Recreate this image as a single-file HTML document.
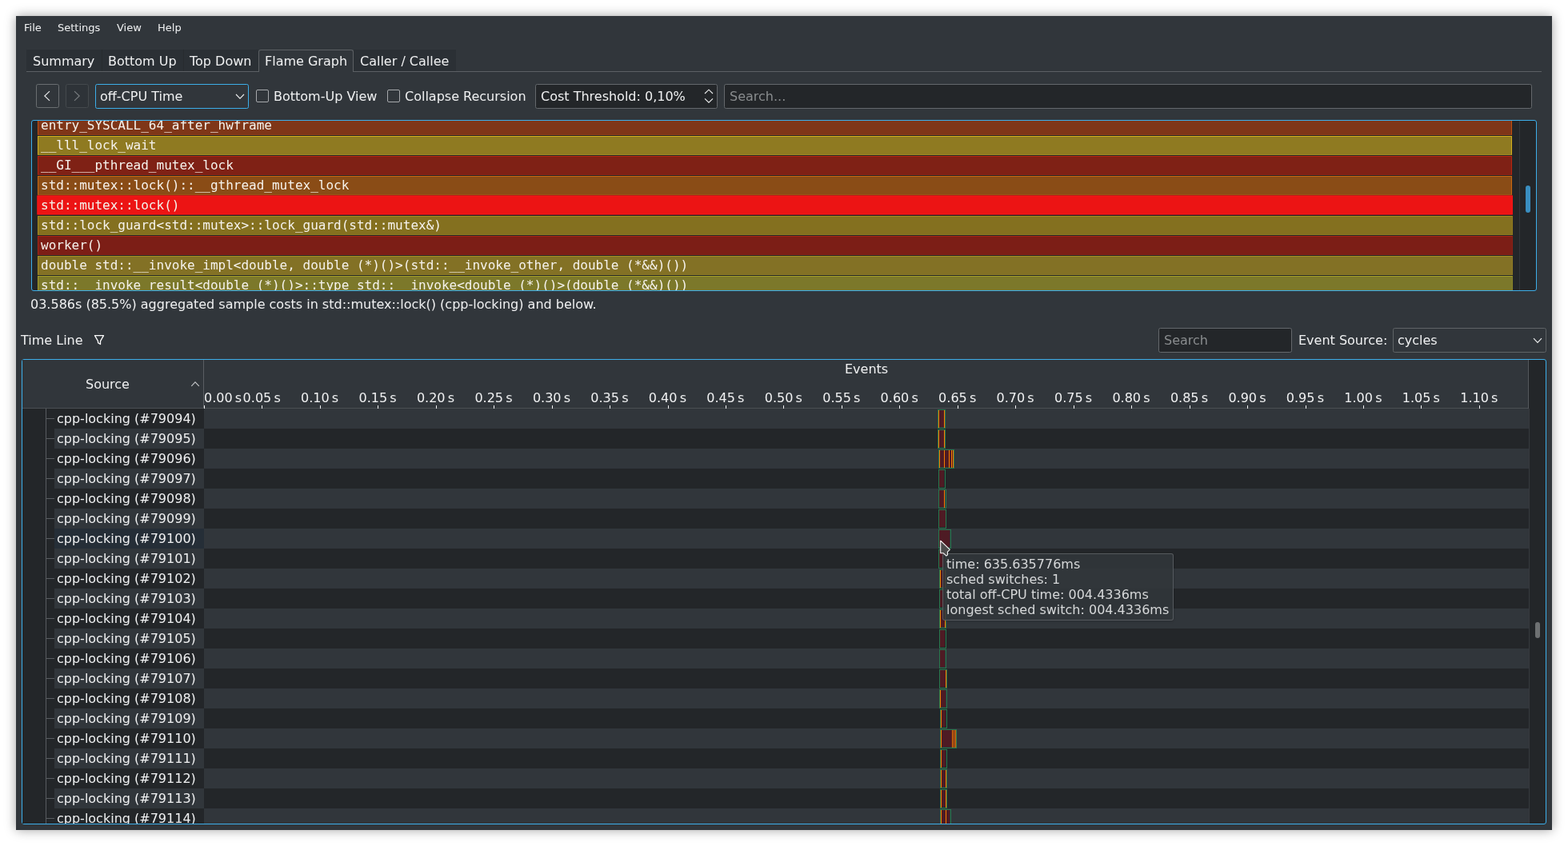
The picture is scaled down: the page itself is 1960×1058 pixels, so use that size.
<!DOCTYPE html>
<html lang="en">
<head>
<meta charset="utf-8">
<title>Hotspot</title>
<style>
html,body{margin:0;padding:0;}
body{width:1960px;height:1058px;background:#fff;overflow:hidden;position:relative;
  font-family:"DejaVu Sans","Liberation Sans",sans-serif;font-size:16px;color:#eff0f1;}
*{box-sizing:border-box;}
#win{position:absolute;left:20px;top:20px;width:1920px;height:1018px;background:#31363b;
  box-shadow:0 0 13px rgba(0,0,0,.38);}
#layer{position:absolute;left:0;top:0;width:1960px;height:1058px;will-change:transform;}
.a{position:absolute;}
.t{position:absolute;white-space:pre;line-height:20px;height:20px;}
.menu{font-size:13px;}
.tabbg{position:absolute;background:#2b3035;top:62px;height:27px;}
.btn{position:absolute;border:1px solid #6a6e71;border-radius:2.5px;background:#31363b;}
.field{position:absolute;border:1px solid #64686c;border-radius:2.5px;background:#232629;}
.cb{position:absolute;width:16px;height:16px;border:1px solid #a6a9ac;border-radius:2px;background:#31363b;}
.ph{color:#898c8e;}
svg{position:absolute;left:0;top:0;overflow:visible;}
.bar{position:absolute;left:47px;height:24px;border:1px solid;font-family:"DejaVu Sans Mono","Liberation Mono",monospace;
  font-size:16px;line-height:22px;padding-left:3px;white-space:pre;overflow:hidden;color:#f5f2ec;}
.row{position:absolute;left:28px;width:1883px;height:25px;background:#232629;}
.ev{position:absolute;left:227px;top:0;width:1656px;height:25px;}
.src{position:absolute;left:40px;top:0;height:25px;width:187px;line-height:25px;padding-left:3px;white-space:pre;}
.alt{background:#31363b;}
.tl{position:absolute;top:488px;line-height:20px;height:20px;white-space:pre;}
.box{position:absolute;border:1px solid #2f7d55;background:#4e1a23;}
.o{position:absolute;top:0;bottom:0;width:1px;background:#f27c0a;}
</style>
</head>
<body>
<div id="win"></div>
<div id="layer">
<div class="t menu" style="left:30px;top:25px;">File</div>
<div class="t menu" style="left:72px;top:25px;">Settings</div>
<div class="t menu" style="left:146px;top:25px;">View</div>
<div class="t menu" style="left:197px;top:25px;">Help</div>
<div class="a" style="left:33px;top:89px;width:1894px;height:1px;background:#5c6064;"></div>
<div class="tabbg" style="left:33px;width:290px;"></div>
<div class="tabbg" style="left:442px;width:128px;"></div>
<div class="a" style="left:127px;top:62px;width:1px;height:27px;background:#272b2f;"></div>
<div class="a" style="left:229px;top:62px;width:1px;height:27px;background:#272b2f;"></div>
<div class="a" style="left:323px;top:62px;width:119px;height:28px;border:1px solid #5c6064;border-bottom:0;border-radius:3px 3px 0 0;background:#31363b;"></div>
<div class="t" style="left:41px;top:67px;">Summary</div>
<div class="t" style="left:135px;top:67px;">Bottom Up</div>
<div class="t" style="left:237px;top:67px;">Top Down</div>
<div class="t" style="left:331px;top:67px;">Flame Graph</div>
<div class="t" style="left:450px;top:67px;">Caller / Callee</div>
<div class="btn" style="left:45px;top:105px;width:29px;height:30px;"></div>
<div class="btn" style="left:82px;top:105px;width:29px;height:30px;border-color:#44494d;background:#2e3338;"></div>
<div class="btn" style="left:119px;top:105px;width:192px;height:31px;border-color:#3daee9;"></div>
<div class="t" style="left:125px;top:111px;">off-CPU Time</div>
<div class="cb" style="left:320px;top:112px;"></div>
<div class="t" style="left:342px;top:111px;">Bottom-Up View</div>
<div class="cb" style="left:484px;top:112px;"></div>
<div class="t" style="left:506px;top:111px;">Collapse Recursion</div>
<div class="field" style="left:669px;top:105px;width:228px;height:31px;"></div>
<div class="t" style="left:676px;top:111px;">Cost Threshold: 0,10%</div>
<div class="field" style="left:905px;top:105px;width:1010px;height:31px;"></div>
<div class="t ph" style="left:912px;top:111px;">Search...</div>
<div class="a" style="left:39px;top:150px;width:1882px;height:214px;border:1px solid #3daee9;border-radius:3px;background:#232629;overflow:hidden;">
<div class="a" style="left:-40px;top:-151px;width:1960px;height:600px;">
<div class="bar" style="top:145px;width:1843px;background:#7f3618;border-color:#c2500f;border-bottom-color:#903c16;border-right-color:#c2500f;">entry_SYSCALL_64_after_hwframe</div>
<div class="bar" style="top:170px;width:1843px;background:#8f7a21;border-color:#d4ad1b;border-bottom-color:#a08720;border-right-color:#d4ad1b;">__lll_lock_wait</div>
<div class="bar" style="top:195px;width:1843px;background:#7f2115;border-color:#b8260f;border-bottom-color:#8d2214;border-right-color:#b8260f;">__GI___pthread_mutex_lock</div>
<div class="bar" style="top:220px;width:1843px;background:#8a4c16;border-color:#c9680f;border-bottom-color:#9a5314;border-right-color:#c9680f;">std::mutex::lock()::__gthread_mutex_lock</div>
<svg width="1960" height="600" viewBox="0 0 1960 600"><rect x="46.4" y="244.4" width="1844.5" height="24.1" fill="#ec1414"/><rect x="47.1" y="245.1" width="1843.1" height="22.7" fill="none" stroke="#fb1616" stroke-width="1"/></svg><div class="bar" style="top:245px;width:1844px;background:none;border-color:transparent;">std::mutex::lock()</div>
<div class="bar" style="top:270px;width:1844px;background:#84701f;border-color:#a88d1c;border-bottom-color:#8d771e;border-right-color:#8f791e;">std::lock_guard&lt;std::mutex&gt;::lock_guard(std::mutex&amp;)</div>
<div class="bar" style="top:295px;width:1844px;background:#7c1e16;border-color:#a82413;border-bottom-color:#872015;border-right-color:#892015;">worker()</div>
<div class="bar" style="top:320px;width:1844px;background:#837125;border-color:#a68f22;border-bottom-color:#8c7824;border-right-color:#8e7a24;">double std::__invoke_impl&lt;double, double (*)()&gt;(std::__invoke_other, double (*&amp;&amp;)())</div>
<div class="bar" style="top:345px;width:1844px;background:#7c782a;border-color:#a39d27;border-bottom-color:#868129;border-right-color:#888329;">std::__invoke_result&lt;double (*)()&gt;::type std::__invoke&lt;double (*)()&gt;(double (*&amp;&amp;)())</div>
<div class="a" style="left:1899px;top:151px;width:1px;height:212px;background:#32373b;"></div>
<div class="a" style="left:1907px;top:232px;width:6px;height:34px;border-radius:3px;background:#3a8ec0;"></div>
</div></div>
<div class="t" style="left:38px;top:371px;">03.586s (85.5%) aggregated sample costs in std::mutex::lock() (cpp-locking) and below.</div>
<div class="t" style="left:26px;top:416px;">Time Line</div>
<div class="field" style="left:1448px;top:410px;width:167px;height:31px;"></div>
<div class="t ph" style="left:1455px;top:416px;">Search</div>
<div class="t" style="left:1623px;top:416px;">Event Source:</div>
<div class="btn" style="left:1741px;top:410px;width:192px;height:31px;border-color:#5f6366;"></div>
<div class="t" style="left:1747px;top:416px;">cycles</div>
<div class="a" style="left:27px;top:449px;width:1906px;height:582px;border:1px solid #3daee9;border-radius:3px;background:#232629;"></div>
<div class="a" style="left:28px;top:450px;width:1883px;height:60px;background:#31363b;"></div>
<div class="a" style="left:28px;top:510px;width:1883px;height:1px;background:#4a4f53;"></div>
<div class="a" style="left:254px;top:450px;width:1px;height:60px;background:#5a5e62;"></div>
<div class="a" style="left:1910px;top:450px;width:1px;height:61px;background:#54585c;"></div>
<div class="a" style="left:1911px;top:511px;width:1px;height:519px;background:#363a3e;"></div>
<div class="t" style="left:107px;top:471px;">Source</div>
<div class="t" style="left:1056px;top:452px;">Events</div>
<div class="a" style="left:254.8px;top:507px;width:1px;height:4px;background:#eff0f1;"></div>
<div class="tl" style="left:255px;">0.00 s</div>
<div class="a" style="left:327.3px;top:507px;width:1px;height:4px;background:#eff0f1;"></div>
<div class="tl" style="left:277.2px;width:100px;text-align:center;">0.05 s</div>
<div class="a" style="left:399.7px;top:507px;width:1px;height:4px;background:#eff0f1;"></div>
<div class="tl" style="left:349.6px;width:100px;text-align:center;">0.10 s</div>
<div class="a" style="left:472.2px;top:507px;width:1px;height:4px;background:#eff0f1;"></div>
<div class="tl" style="left:422.1px;width:100px;text-align:center;">0.15 s</div>
<div class="a" style="left:544.6px;top:507px;width:1px;height:4px;background:#eff0f1;"></div>
<div class="tl" style="left:494.5px;width:100px;text-align:center;">0.20 s</div>
<div class="a" style="left:617.1px;top:507px;width:1px;height:4px;background:#eff0f1;"></div>
<div class="tl" style="left:567.0px;width:100px;text-align:center;">0.25 s</div>
<div class="a" style="left:689.6px;top:507px;width:1px;height:4px;background:#eff0f1;"></div>
<div class="tl" style="left:639.5px;width:100px;text-align:center;">0.30 s</div>
<div class="a" style="left:762.0px;top:507px;width:1px;height:4px;background:#eff0f1;"></div>
<div class="tl" style="left:711.9px;width:100px;text-align:center;">0.35 s</div>
<div class="a" style="left:834.5px;top:507px;width:1px;height:4px;background:#eff0f1;"></div>
<div class="tl" style="left:784.4px;width:100px;text-align:center;">0.40 s</div>
<div class="a" style="left:906.9px;top:507px;width:1px;height:4px;background:#eff0f1;"></div>
<div class="tl" style="left:856.8px;width:100px;text-align:center;">0.45 s</div>
<div class="a" style="left:979.4px;top:507px;width:1px;height:4px;background:#eff0f1;"></div>
<div class="tl" style="left:929.3px;width:100px;text-align:center;">0.50 s</div>
<div class="a" style="left:1051.9px;top:507px;width:1px;height:4px;background:#eff0f1;"></div>
<div class="tl" style="left:1001.8px;width:100px;text-align:center;">0.55 s</div>
<div class="a" style="left:1124.3px;top:507px;width:1px;height:4px;background:#eff0f1;"></div>
<div class="tl" style="left:1074.2px;width:100px;text-align:center;">0.60 s</div>
<div class="a" style="left:1196.8px;top:507px;width:1px;height:4px;background:#eff0f1;"></div>
<div class="tl" style="left:1146.7px;width:100px;text-align:center;">0.65 s</div>
<div class="a" style="left:1269.2px;top:507px;width:1px;height:4px;background:#eff0f1;"></div>
<div class="tl" style="left:1219.1px;width:100px;text-align:center;">0.70 s</div>
<div class="a" style="left:1341.7px;top:507px;width:1px;height:4px;background:#eff0f1;"></div>
<div class="tl" style="left:1291.6px;width:100px;text-align:center;">0.75 s</div>
<div class="a" style="left:1414.1px;top:507px;width:1px;height:4px;background:#eff0f1;"></div>
<div class="tl" style="left:1364.0px;width:100px;text-align:center;">0.80 s</div>
<div class="a" style="left:1486.6px;top:507px;width:1px;height:4px;background:#eff0f1;"></div>
<div class="tl" style="left:1436.5px;width:100px;text-align:center;">0.85 s</div>
<div class="a" style="left:1559.1px;top:507px;width:1px;height:4px;background:#eff0f1;"></div>
<div class="tl" style="left:1509.0px;width:100px;text-align:center;">0.90 s</div>
<div class="a" style="left:1631.5px;top:507px;width:1px;height:4px;background:#eff0f1;"></div>
<div class="tl" style="left:1581.4px;width:100px;text-align:center;">0.95 s</div>
<div class="a" style="left:1704.0px;top:507px;width:1px;height:4px;background:#eff0f1;"></div>
<div class="tl" style="left:1653.9px;width:100px;text-align:center;">1.00 s</div>
<div class="a" style="left:1776.4px;top:507px;width:1px;height:4px;background:#eff0f1;"></div>
<div class="tl" style="left:1726.3px;width:100px;text-align:center;">1.05 s</div>
<div class="a" style="left:1848.9px;top:507px;width:1px;height:4px;background:#eff0f1;"></div>
<div class="tl" style="left:1798.8px;width:100px;text-align:center;">1.10 s</div>
<div class="row" style="top:511px;height:25px;overflow:hidden;"><div class="src">cpp-locking (#79094)</div><div class="ev alt"></div></div>
<div class="row" style="top:536px;height:25px;overflow:hidden;"><div class="src alt">cpp-locking (#79095)</div><div class="ev"></div></div>
<div class="row" style="top:561px;height:25px;overflow:hidden;"><div class="src">cpp-locking (#79096)</div><div class="ev alt"></div></div>
<div class="row" style="top:586px;height:25px;overflow:hidden;"><div class="src alt">cpp-locking (#79097)</div><div class="ev"></div></div>
<div class="row" style="top:611px;height:25px;overflow:hidden;"><div class="src">cpp-locking (#79098)</div><div class="ev alt"></div></div>
<div class="row" style="top:636px;height:25px;overflow:hidden;"><div class="src alt">cpp-locking (#79099)</div><div class="ev"></div></div>
<div class="row" style="top:661px;height:25px;overflow:hidden;"><div class="src" style="background:#252e37;">cpp-locking (#79100)</div><div class="ev alt"></div></div>
<div class="row" style="top:686px;height:25px;overflow:hidden;"><div class="src alt">cpp-locking (#79101)</div><div class="ev"></div></div>
<div class="row" style="top:711px;height:25px;overflow:hidden;"><div class="src">cpp-locking (#79102)</div><div class="ev alt"></div></div>
<div class="row" style="top:736px;height:25px;overflow:hidden;"><div class="src alt">cpp-locking (#79103)</div><div class="ev"></div></div>
<div class="row" style="top:761px;height:25px;overflow:hidden;"><div class="src">cpp-locking (#79104)</div><div class="ev alt"></div></div>
<div class="row" style="top:786px;height:25px;overflow:hidden;"><div class="src alt">cpp-locking (#79105)</div><div class="ev"></div></div>
<div class="row" style="top:811px;height:25px;overflow:hidden;"><div class="src">cpp-locking (#79106)</div><div class="ev alt"></div></div>
<div class="row" style="top:836px;height:25px;overflow:hidden;"><div class="src alt">cpp-locking (#79107)</div><div class="ev"></div></div>
<div class="row" style="top:861px;height:25px;overflow:hidden;"><div class="src">cpp-locking (#79108)</div><div class="ev alt"></div></div>
<div class="row" style="top:886px;height:25px;overflow:hidden;"><div class="src alt">cpp-locking (#79109)</div><div class="ev"></div></div>
<div class="row" style="top:911px;height:25px;overflow:hidden;"><div class="src">cpp-locking (#79110)</div><div class="ev alt"></div></div>
<div class="row" style="top:936px;height:25px;overflow:hidden;"><div class="src alt">cpp-locking (#79111)</div><div class="ev"></div></div>
<div class="row" style="top:961px;height:25px;overflow:hidden;"><div class="src">cpp-locking (#79112)</div><div class="ev alt"></div></div>
<div class="row" style="top:986px;height:25px;overflow:hidden;"><div class="src alt">cpp-locking (#79113)</div><div class="ev"></div></div>
<div class="row" style="top:1011px;height:19px;overflow:hidden;"><div class="src">cpp-locking (#79114)</div><div class="ev alt"></div></div>
<div class="a" style="left:57px;top:511px;width:1px;height:519px;background:#585c60;"></div>
<div class="a" style="left:58px;top:523px;width:10px;height:1px;background:#585c60;"></div>
<div class="a" style="left:58px;top:548px;width:10px;height:1px;background:#585c60;"></div>
<div class="a" style="left:58px;top:573px;width:10px;height:1px;background:#585c60;"></div>
<div class="a" style="left:58px;top:598px;width:10px;height:1px;background:#585c60;"></div>
<div class="a" style="left:58px;top:623px;width:10px;height:1px;background:#585c60;"></div>
<div class="a" style="left:58px;top:648px;width:10px;height:1px;background:#585c60;"></div>
<div class="a" style="left:58px;top:673px;width:10px;height:1px;background:#585c60;"></div>
<div class="a" style="left:58px;top:698px;width:10px;height:1px;background:#585c60;"></div>
<div class="a" style="left:58px;top:723px;width:10px;height:1px;background:#585c60;"></div>
<div class="a" style="left:58px;top:748px;width:10px;height:1px;background:#585c60;"></div>
<div class="a" style="left:58px;top:773px;width:10px;height:1px;background:#585c60;"></div>
<div class="a" style="left:58px;top:798px;width:10px;height:1px;background:#585c60;"></div>
<div class="a" style="left:58px;top:823px;width:10px;height:1px;background:#585c60;"></div>
<div class="a" style="left:58px;top:848px;width:10px;height:1px;background:#585c60;"></div>
<div class="a" style="left:58px;top:873px;width:10px;height:1px;background:#585c60;"></div>
<div class="a" style="left:58px;top:898px;width:10px;height:1px;background:#585c60;"></div>
<div class="a" style="left:58px;top:923px;width:10px;height:1px;background:#585c60;"></div>
<div class="a" style="left:58px;top:948px;width:10px;height:1px;background:#585c60;"></div>
<div class="a" style="left:58px;top:973px;width:10px;height:1px;background:#585c60;"></div>
<div class="a" style="left:58px;top:998px;width:10px;height:1px;background:#585c60;"></div>
<div class="a" style="left:58px;top:1023px;width:10px;height:1px;background:#585c60;"></div>
<div class="a" style="left:1919px;top:778px;width:6px;height:20px;border-radius:3px;background:#6e7173;"></div>
<svg width="1960" height="1058" viewBox="0 0 1960 1058" fill="none" stroke="#eff0f1" stroke-width="1.1">
<path d="M62 114.2 L55.8 120 L62 125.8"/>
<path d="M93 114.2 L99.2 120 L93 125.8" stroke="#7b7f82"/>
<path d="M295 118 L300 123.2 L305 118"/>
<path d="M881 117 L886 112.2 L891 117"/>
<path d="M881 123.4 L886 128.2 L891 123.4"/>
<path d="M1917 423.2 L1922 428.4 L1927 423.2"/>
<path d="M239.3 482.8 L244 477.8 L248.8 482.8" stroke="#c6c8ca"/>
<path d="M118.5 419.6 H129.5 L125.5 426.6 V430.5 L122.5 428.6 V426.6 Z" stroke-linejoin="round" stroke-width="1.3" stroke="#fcfcfc"/>
</svg>
<svg width="1960" height="1058" viewBox="0 0 1960 1058" shape-rendering="crispEdges">
<clipPath id="tlc"><rect x="28" y="511" width="1883" height="519"/></clipPath>
<g clip-path="url(#tlc)">
<rect x="1173" y="513" width="8" height="21" fill="#4e1b24"/><rect x="1173" y="513" width="1" height="22" fill="#f57c00"/><rect x="1180" y="513" width="1" height="22" fill="#f57c00"/><rect x="1172.5" y="512.5" width="9" height="23" fill="none" stroke="#27794e" stroke-width="1"/>
<rect x="1173" y="538" width="8" height="21" fill="#4e1b24"/><rect x="1173" y="538" width="1" height="22" fill="#f57c00"/><rect x="1180" y="538" width="1" height="22" fill="#f57c00"/><rect x="1172.5" y="537.5" width="9" height="23" fill="none" stroke="#27794e" stroke-width="1"/>
<rect x="1174" y="563" width="18" height="21" fill="#4e1b24"/><rect x="1174" y="563" width="1" height="22" fill="#f57c00"/><rect x="1180" y="563" width="1" height="22" fill="#f57c00"/><rect x="1186" y="563" width="1" height="22" fill="#f57c00"/><rect x="1189" y="563" width="1" height="22" fill="#f57c00"/><rect x="1191" y="563" width="1" height="22" fill="#f57c00"/><rect x="1173.5" y="562.5" width="19" height="23" fill="none" stroke="#27794e" stroke-width="1"/>
<rect x="1174" y="588" width="6" height="21" fill="#4e1b24"/><rect x="1173.5" y="587.5" width="8" height="23" fill="none" stroke="#27794e" stroke-width="1"/>
<rect x="1174" y="613" width="7" height="21" fill="#4e1b24"/><rect x="1180" y="613" width="1" height="22" fill="#f57c00"/><rect x="1173.5" y="612.5" width="9" height="23" fill="none" stroke="#27794e" stroke-width="1"/>
<rect x="1174" y="638" width="7.5" height="21" fill="#4e1b24"/><rect x="1173.5" y="637.5" width="9" height="23" fill="none" stroke="#27794e" stroke-width="1"/>
<rect x="1174" y="663" width="13.3" height="21" fill="#4e1b24"/><rect x="1173.5" y="662.5" width="15" height="23" fill="none" stroke="#27794e" stroke-width="1"/>
<rect x="1174" y="688" width="7" height="21" fill="#4e1b24"/><rect x="1173.5" y="687.5" width="9" height="23" fill="none" stroke="#27794e" stroke-width="1"/>
<rect x="1175" y="713" width="7" height="21" fill="#4e1b24"/><rect x="1175" y="713" width="1" height="22" fill="#f57c00"/><rect x="1181" y="713" width="1" height="22" fill="#f57c00"/><rect x="1174.5" y="712.5" width="8" height="23" fill="none" stroke="#27794e" stroke-width="1"/>
<rect x="1175" y="738" width="6" height="21" fill="#4e1b24"/><rect x="1174.5" y="737.5" width="8" height="23" fill="none" stroke="#27794e" stroke-width="1"/>
<rect x="1175" y="763" width="7" height="21" fill="#4e1b24"/><rect x="1175" y="763" width="1" height="22" fill="#f57c00"/><rect x="1181" y="763" width="1" height="22" fill="#f57c00"/><rect x="1174.5" y="762.5" width="8" height="23" fill="none" stroke="#27794e" stroke-width="1"/>
<rect x="1175" y="788" width="6" height="21" fill="#4e1b24"/><rect x="1174.5" y="787.5" width="8" height="23" fill="none" stroke="#27794e" stroke-width="1"/>
<rect x="1175" y="813" width="6" height="21" fill="#4e1b24"/><rect x="1174.5" y="812.5" width="8" height="23" fill="none" stroke="#27794e" stroke-width="1"/>
<rect x="1175" y="838" width="8" height="21" fill="#4e1b24"/><rect x="1182" y="838" width="1" height="22" fill="#f57c00"/><rect x="1174.5" y="837.5" width="9" height="23" fill="none" stroke="#27794e" stroke-width="1"/>
<rect x="1175" y="863" width="7.3" height="21" fill="#4e1b24"/><rect x="1175" y="863" width="1" height="22" fill="#f57c00"/><rect x="1174.5" y="862.5" width="9" height="23" fill="none" stroke="#27794e" stroke-width="1"/>
<rect x="1176" y="888" width="6" height="21" fill="#4e1b24"/><rect x="1176" y="888" width="1" height="22" fill="#f57c00"/><rect x="1175.5" y="887.5" width="8" height="23" fill="none" stroke="#27794e" stroke-width="1"/>
<rect x="1176" y="913" width="19" height="21" fill="#4e1b24"/><rect x="1176" y="913" width="1" height="22" fill="#f57c00"/><rect x="1190" y="913" width="1" height="22" fill="#f57c00"/><rect x="1192" y="913" width="1" height="22" fill="#f57c00"/><rect x="1194" y="913" width="1" height="22" fill="#f57c00"/><rect x="1175.5" y="912.5" width="20" height="23" fill="none" stroke="#27794e" stroke-width="1"/>
<rect x="1176" y="938" width="6" height="21" fill="#4e1b24"/><rect x="1176" y="938" width="1" height="22" fill="#f57c00"/><rect x="1175.5" y="937.5" width="8" height="23" fill="none" stroke="#27794e" stroke-width="1"/>
<rect x="1176" y="963" width="7" height="21" fill="#4e1b24"/><rect x="1176" y="963" width="1" height="22" fill="#f57c00"/><rect x="1182" y="963" width="1" height="22" fill="#f57c00"/><rect x="1175.5" y="962.5" width="8" height="23" fill="none" stroke="#27794e" stroke-width="1"/>
<rect x="1176" y="988" width="7" height="21" fill="#4e1b24"/><rect x="1176" y="988" width="1" height="22" fill="#f57c00"/><rect x="1182" y="988" width="1" height="22" fill="#f57c00"/><rect x="1175.5" y="987.5" width="8" height="23" fill="none" stroke="#27794e" stroke-width="1"/>
<rect x="1176" y="1013" width="11.3" height="21" fill="#4e1b24"/><rect x="1176" y="1013" width="1" height="22" fill="#f57c00"/><rect x="1182" y="1013" width="1" height="22" fill="#f57c00"/><rect x="1175.5" y="1012.5" width="13" height="23" fill="none" stroke="#27794e" stroke-width="1"/>
</g></svg>
<div class="a" style="left:1178px;top:692px;width:289px;height:84px;border:1px solid rgba(100,104,108,.75);border-radius:3px;background:rgba(49,54,59,.87);box-shadow:0 1px 3px rgba(0,0,0,.18);"></div>
<div class="t" style="left:1183px;top:696px;line-height:19px;height:19px;color:#d6d8d9;">time: 635.635776ms</div>
<div class="t" style="left:1183px;top:715px;line-height:19px;height:19px;color:#d6d8d9;">sched switches: 1</div>
<div class="t" style="left:1183px;top:734px;line-height:19px;height:19px;color:#d6d8d9;">total off-CPU time: 004.4336ms</div>
<div class="t" style="left:1183px;top:753px;line-height:19px;height:19px;color:#d6d8d9;">longest sched switch: 004.4336ms</div>
<svg width="1960" height="1058" viewBox="0 0 1960 1058"><path d="M1175.7 676.2 L1175.7 691.8 L1179.4 691.8 L1182.9 695.2 L1184.4 694.1 L1184.4 690.2 L1187.3 687.3 Z" fill="#4c4c4c" stroke="#fff" stroke-width="1.05" stroke-linejoin="round"/></svg>
</div>
</body>
</html>
